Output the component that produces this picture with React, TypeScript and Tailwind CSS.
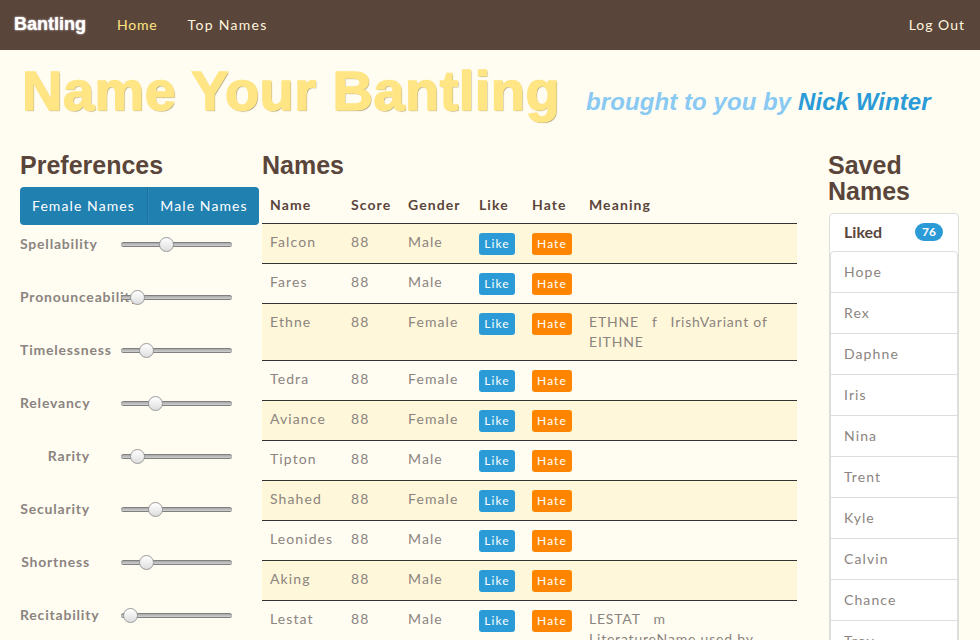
const sliders: [string, number][] = [
  ["Spellability", 46],
  ["Pronounceability", 17],
  ["Timelessness", 26],
  ["Relevancy", 35],
  ["Rarity", 17],
  ["Secularity", 35],
  ["Shortness", 26],
  ["Recitability", 10],
];

const names: [string, string, string?][] = [
  ["Falcon", "Male"],
  ["Fares", "Male"],
  ["Ethne", "Female", "ETHNE   f   IrishVariant of\nEITHNE"],
  ["Tedra", "Female"],
  ["Aviance", "Female"],
  ["Tipton", "Male"],
  ["Shahed", "Female"],
  ["Leonides", "Male"],
  ["Aking", "Male"],
  ["Lestat", "Male", "LESTAT   m\nLiteratureName used by"],
];

const liked = ["Hope", "Rex", "Daphne", "Iris", "Nina", "Trent", "Kyle", "Calvin", "Chance", "Troy"];

function Slider({ label, left }: { label: string; left: number }) {
  return (
    <div className="flex h-5 mb-[33px] items-center">
      <div className="w-[70px] shrink-0 text-right whitespace-nowrap text-[14px] leading-5 font-bold text-[#8b8480] tracking-[0.8px]">
        {label}
      </div>
      <div className="relative ml-[31px] w-[111px] h-[5px] rounded-full border-y border-[#808080] bg-gradient-to-b from-[#a8a8a8] to-[#d0d0d0]">
        {/* knob */}
        <div
          className="absolute top-[-6px] w-[15px] h-[15px] rounded-full border border-[#999999] bg-gradient-to-b from-white to-[#dedede]"
          style={{ left }}
        />
      </div>
    </div>
  );
}

function NameRow({ name, gender, meaning, odd }: { name: string; gender: string; meaning?: string; odd: boolean }) {
  const cell = "border-t border-[#333333] px-2 pt-2 pb-2 align-top leading-5";
  return (
    <tr className={odd ? "bg-[#fff7d9]" : ""}>
      <td className={cell}>{name}</td>
      <td className={cell}>88</td>
      <td className={cell}>{gender}</td>
      <td className={cell}>
        <div className="mt-px w-9 h-[22px] rounded-[3px] bg-[#2a9bd6] text-white text-[12px] leading-[22px] text-center">Like</div>
      </td>
      <td className={cell}>
        <div className="mt-px w-10 h-[22px] rounded-[3px] bg-[#ff8500] text-white text-[12px] leading-[22px] text-center">Hate</div>
      </td>
      <td className={`${cell} whitespace-pre-wrap tracking-[0.8px]`}>{meaning}</td>
    </tr>
  );
}

export default function App() {
  return (
    <div className="h-[640px] overflow-hidden bg-[#fffdf2] font-['Lato',sans-serif] text-[14px] tracking-[1.1px] text-[#8b8480]">
      {/* Navbar */}
      <div className="flex h-[50px] items-center bg-[#5a453b] pb-[2px] pl-[14px] pr-[15px]">
        <div className="font-['Liberation_Sans',sans-serif] text-[18px] font-bold tracking-normal text-white [text-shadow:0_0_2px_#ffffff]">
          Bantling
        </div>
        <div className="ml-[31px] tracking-[0.8px] text-[#ffe680]">Home</div>
        <div className="ml-[30px] tracking-[1.3px] text-[#fff5dc]">Top Names</div>
        <div className="ml-auto tracking-[1px] text-[#fff5dc]">Log Out</div>
      </div>

      {/* Title */}
      <div className="flex h-[102px] items-baseline pl-[22px] pt-[9px] font-['Liberation_Sans',sans-serif] font-bold tracking-normal">
        <h1 className="text-[56px] leading-[64px] tracking-[0.45px] text-[#ffe584] [-webkit-text-stroke:1.5px_#ffe584] [text-shadow:1px_1px_1px_#9a9070]">
          Name Your Bantling
        </h1>
        <div className="ml-[26px] text-[24px] italic tracking-[0.07px] text-[#89c9f2]">
          brought to you by <span className="text-[#2b9bd8]">Nick Winter</span>
        </div>
      </div>

      <div className="flex pl-5">
        {/* Preferences */}
        <div className="w-[239px] shrink-0">
          <h2 className="font-['Liberation_Sans',sans-serif] text-[25px] font-bold leading-[26px] tracking-normal text-[#5a453b]">
            Preferences
          </h2>
          <div className="mt-[9px] flex h-[38px] rounded-[4px] bg-[#2080b0] pb-[2px] tracking-[1.1px] text-white">
            <div className="flex w-[128px] items-center justify-center border-r border-[#1b6f99]">Female Names</div>
            <div className="flex flex-1 items-center justify-center border-l border-[#2a8abb]">Male Names</div>
          </div>
          <div className="mt-[9px]">
            {sliders.map(([label, left]) => (
              <Slider key={label} label={label} left={left - 8} />
            ))}
          </div>
        </div>

        {/* Names */}
        <div className="ml-[3px] w-[535px] shrink-0">
          <h2 className="font-['Liberation_Sans',sans-serif] text-[25px] font-bold leading-[26px] tracking-normal text-[#5a453b]">
            Names
          </h2>
          <table className="mt-[9px] w-full table-fixed border-collapse">
            <colgroup>
              <col className="w-[81px]" />
              <col className="w-[57px]" />
              <col className="w-[71px]" />
              <col className="w-[53px]" />
              <col className="w-[57px]" />
              <col />
            </colgroup>
            <thead>
              <tr className="h-9 text-left font-bold text-[#5a453b]">
                <th className="px-2 pb-[1px] font-bold">Name</th>
                <th className="px-2 pb-[1px] font-bold">Score</th>
                <th className="px-2 pb-[1px] font-bold">Gender</th>
                <th className="px-2 pb-[1px] font-bold">Like</th>
                <th className="px-2 pb-[1px] font-bold">Hate</th>
                <th className="px-2 pb-[1px] font-bold">Meaning</th>
              </tr>
            </thead>
            <tbody>
              {names.map(([name, gender, meaning], i) => (
                <NameRow key={name} name={name} gender={gender} meaning={meaning} odd={i % 2 === 0} />
              ))}
            </tbody>
          </table>
        </div>

        {/* Saved names */}
        <div className="ml-[31px] w-[131px] shrink-0">
          <h2 className="font-['Liberation_Sans',sans-serif] text-[25px] font-bold leading-[26px] tracking-normal text-[#5a453b]">
            Saved Names
          </h2>
          <div className="mt-[9px] ml-px w-[130px] rounded-t-[4px] border border-[#dddddd] bg-white">
            <div className="flex h-[37px] items-center justify-between pb-[2px] pl-[14px] pr-[15px]">
              <span className="text-[16px] font-bold tracking-normal text-[#5a453b]">Liked</span>
              <span className="flex h-[18px] w-7 items-center justify-center rounded-full bg-[#2a9bd6] text-[12px] font-bold tracking-normal text-white">
                76
              </span>
            </div>
            <div className="rounded-t-[4px] border border-[#dddddd]">
              {liked.map((n) => (
                <div key={n} className="h-[41px] border-b border-[#dddddd] pl-[13px] leading-[39px]">
                  {n}
                </div>
              ))}
            </div>
          </div>
        </div>
      </div>
    </div>
  );
}
